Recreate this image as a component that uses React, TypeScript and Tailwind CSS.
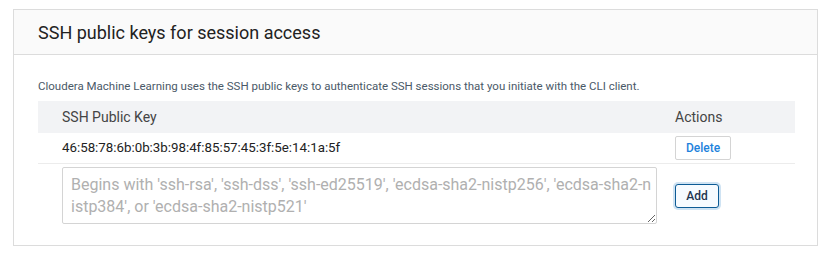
import { useState } from 'react';

const keys = ['46:58:78:6b:0b:3b:98:4f:85:57:45:3f:5e:14:1a:5f'];

const SshKeys = () => {
  const [value, setValue] = useState('');

  return (
    <div className="pl-[13px] pt-[9px] font-['Roboto',sans-serif]">
      <div className="w-[805px] border border-[#dcdcdc] bg-white">
        {/* Header */}
        <div className="h-[45px] flex items-center px-6 bg-[#fafafa] border-b border-[#dcdcdc]">
          <h2 className="text-[18px] text-[#222]">SSH public keys for session access</h2>
        </div>

        {/* Body */}
        <div className="pl-6 pr-[22px] pt-[21px] pb-[21px]">
          <p className="text-[11.5px] leading-5 text-[#4a5968] mb-[5px]">
            Cloudera Machine Learning uses the SSH public keys to authenticate SSH sessions that you initiate with the CLI client.
          </p>

          <div className="grid grid-cols-[1fr_120px]">
            <div className="h-[32px] flex items-center pl-6 bg-[#f2f3f5] text-[14px] text-[#444]">SSH Public Key</div>
            <div className="h-[32px] flex items-center bg-[#f2f3f5] text-[14px] text-[#444]">Actions</div>

            {keys.map((k) => (
              <div key={k} className="contents">
                <div className="h-[31px] flex items-center pl-6 border-b border-[#ececec] text-[13.3px] text-[#222]">{k}</div>
                <div className="h-[31px] flex items-center border-b border-[#ececec]">
                  <button className="h-[24px] w-[56px] rounded-[2px] border border-[#d4d4d4] bg-white text-[12px] font-medium text-[#1e82dc]">
                    Delete
                  </button>
                </div>
              </div>
            ))}

            <div className="pl-6 pr-[18px] pt-[3px]">
              <textarea
                value={value}
                onChange={(e) => setValue(e.target.value)}
                placeholder="Begins with 'ssh-rsa', 'ssh-dss', 'ssh-ed25519', 'ecdsa-sha2-nistp256', 'ecdsa-sha2-nistp384', or 'ecdsa-sha2-nistp521'"
                className="block w-full h-[57px] border border-[#d4d4d4] rounded-[2px] pl-2 pr-1 py-[6px] text-[16px] leading-[22px] break-all text-[#333] placeholder:text-[#b0b0b0] outline-none"
              />
            </div>
            <div className="flex items-center pt-[3px]">
              <button className="h-[24px] w-[44px] rounded-[3px] border border-[#0d5b95] bg-[#f7fbff] text-[12px] font-medium text-[#1f3550] ring-2 ring-[#cfe3f3]">
                Add
              </button>
            </div>
          </div>
        </div>
      </div>
    </div>
  );
};

export default function App() {
  return <SshKeys />;
}
